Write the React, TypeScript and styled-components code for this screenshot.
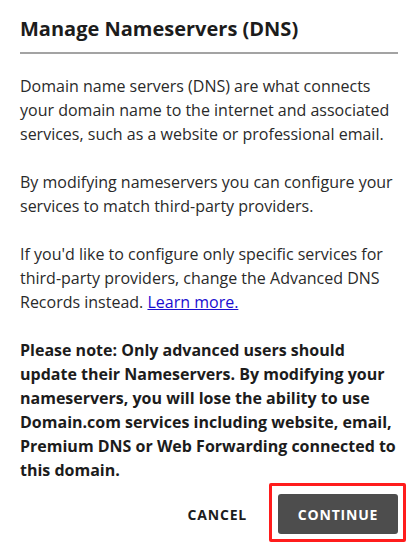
import styled, { createGlobalStyle } from "styled-components";

const GlobalStyle = createGlobalStyle`
  html, body {
    margin: 0;
    padding: 0;
    background: #ffffff;
  }
  body {
    font-family: "Open Sans", "Noto Sans", sans-serif;
    color: #222222;
    -webkit-font-smoothing: antialiased;
  }
`;

const Dialog = styled.div`
  width: 419px;
  height: 548px;
  box-sizing: border-box;
  padding: 15px 21px 14px 20px;
  display: flex;
  flex-direction: column;
  background: #fff;
`;

const Title = styled.h2`
  margin: 0;
  padding-bottom: 9px;
  border-bottom: 2px solid #a3a3a3;
  font-size: 20px;
  line-height: 28px;
  font-weight: 700;
  color: #1c1c1c;
`;

const Body = styled.div`
  margin-top: 20px;
`;

const Paragraph = styled.p<{ $strong?: boolean }>`
  margin: 0 0 24px;
  font-size: 16px;
  line-height: 24px;
  font-weight: ${(props) => (props.$strong ? 700 : 400)};
  color: ${(props) => (props.$strong ? "#1c1c1c" : "#2a2a2a")};

  &:last-child {
    margin-bottom: 0;
  }
`;

const Link = styled.a`
  color: #1a0dd0;
  text-decoration: underline;
  cursor: pointer;
`;

const Footer = styled.div`
  margin-top: 12px;
  display: flex;
  justify-content: flex-end;
  align-items: center;
`;

const TextButton = styled.button`
  height: 40px;
  padding: 0 16px;
  margin-right: 15px;
  border: none;
  background: transparent;
  font-family: inherit;
  font-size: 14px;
  font-weight: 700;
  letter-spacing: 0.8px;
  color: #1c1c1c;
  cursor: pointer;
`;

const Highlight = styled.div`
  position: relative;

  &::after {
    content: "";
    position: absolute;
    top: -11px;
    left: -9px;
    right: -8px;
    bottom: -8px;
    border: 3px solid #ff1c1c;
    border-radius: 2px;
    pointer-events: none;
  }
`;

const PrimaryButton = styled.button`
  width: 120px;
  height: 40px;
  border: none;
  border-radius: 3px;
  background: #4d4d4d;
  color: #ffffff;
  font-family: inherit;
  font-size: 14px;
  font-weight: 700;
  letter-spacing: 0.8px;
  cursor: pointer;
`;

const App = () => {
  return (
    <>
      <GlobalStyle />
      <Dialog>
        <Title>Manage Nameservers (DNS)</Title>
        <Body>
          <Paragraph>
            Domain name servers (DNS) are what connects your domain name to the
            internet and associated services, such as a website or professional
            email.
          </Paragraph>
          <Paragraph>
            By modifying nameservers you can configure your services to match
            third-party providers.
          </Paragraph>
          <Paragraph>
            If you'd like to configure only specific services for third-party
            providers, change the Advanced DNS Records instead.{" "}
            <Link>Learn more.</Link>
          </Paragraph>
          <Paragraph $strong>
            Please note: Only advanced users should update their Nameservers.
            By modifying your nameservers, you will lose the ability to use
            Domain.com services including website, email, Premium DNS or Web
            Forwarding connected to this domain.
          </Paragraph>
        </Body>
        <Footer>
          <TextButton>CANCEL</TextButton>
          <Highlight>
            <PrimaryButton>CONTINUE</PrimaryButton>
          </Highlight>
        </Footer>
      </Dialog>
    </>
  );
};

export default App;
